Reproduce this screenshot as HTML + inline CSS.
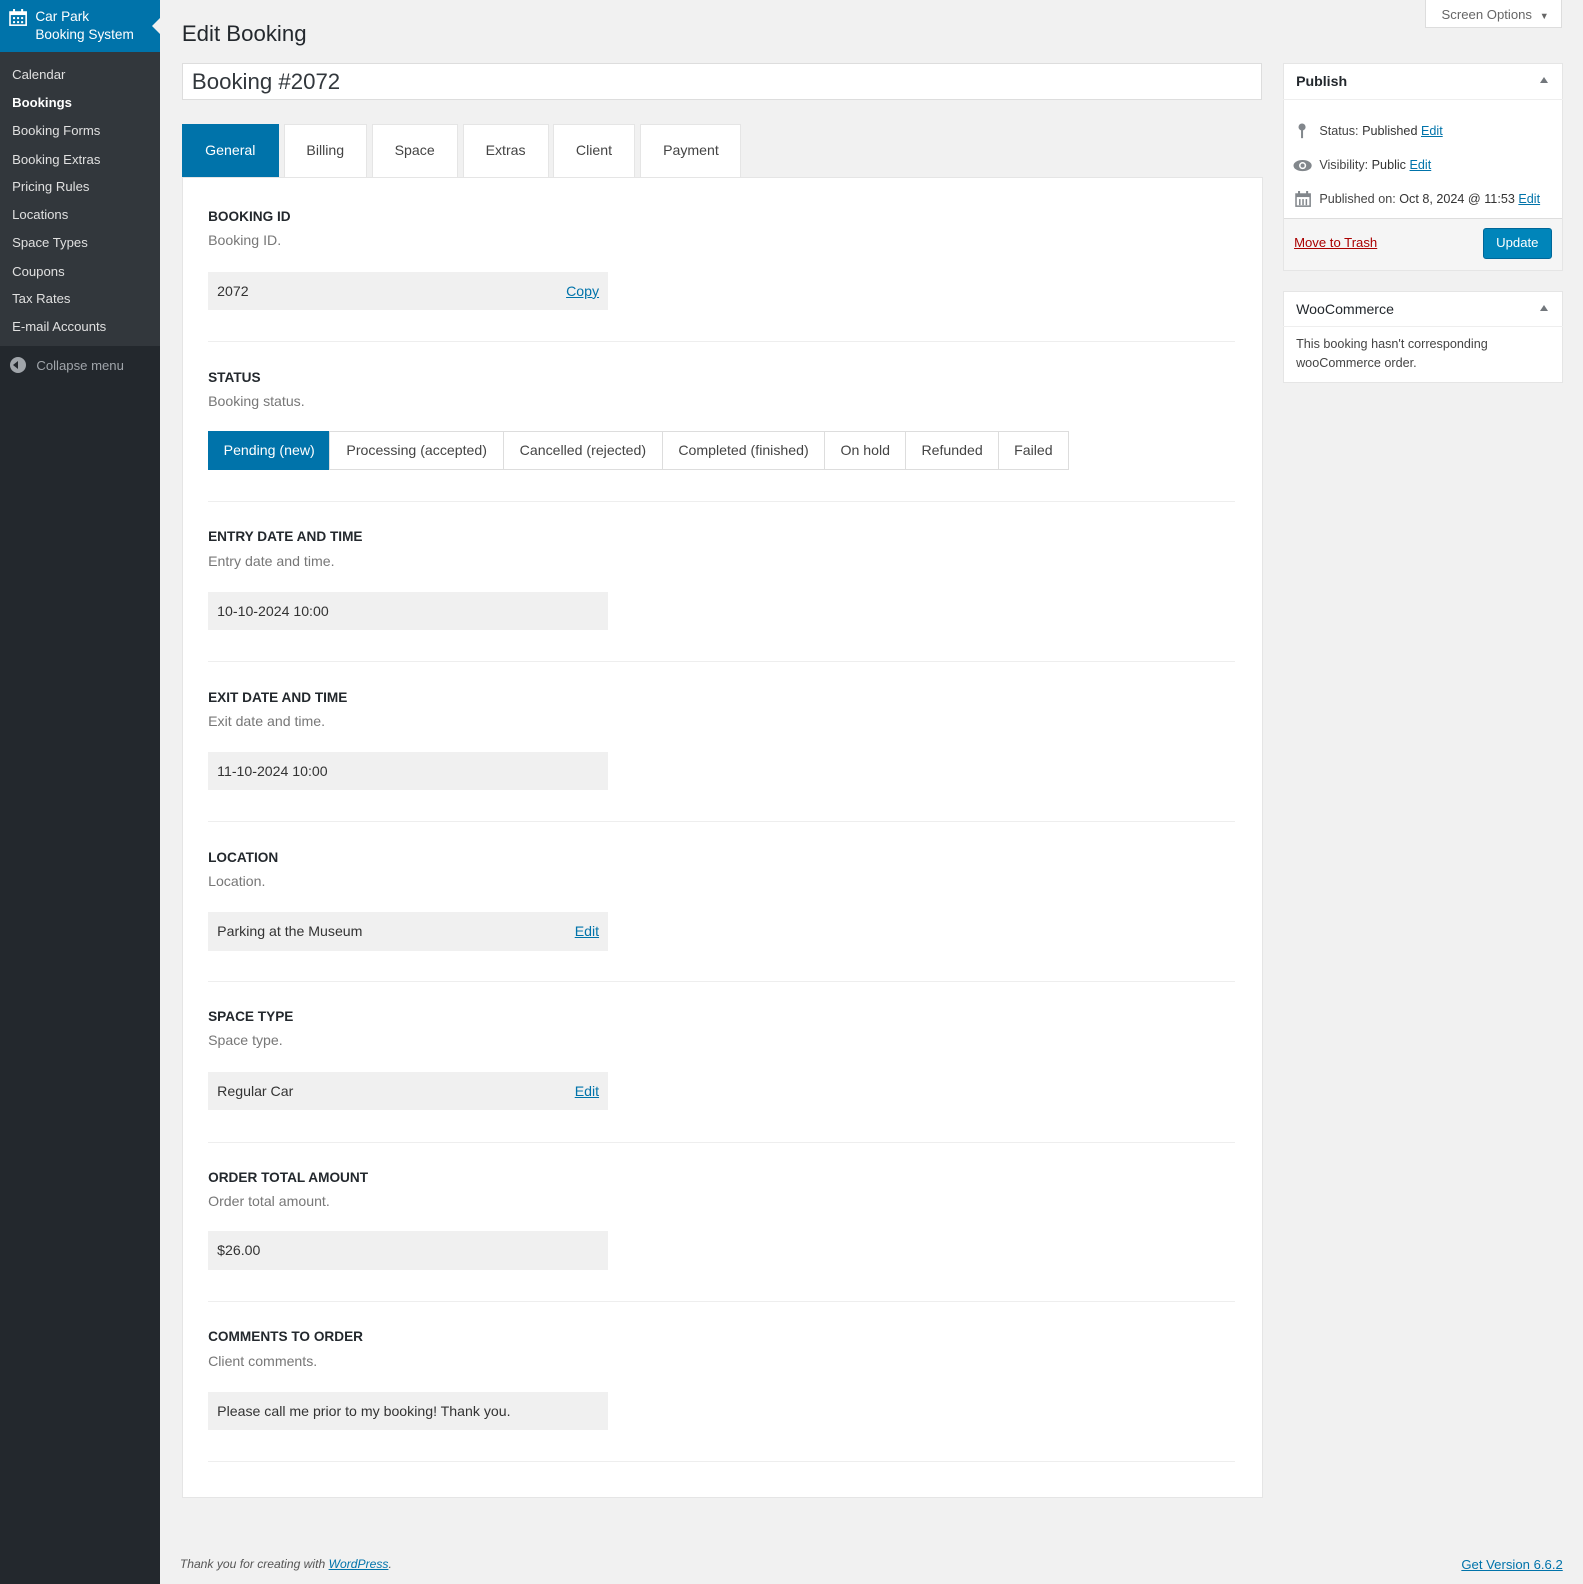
<!DOCTYPE html>
<html><head><meta charset="utf-8"><style>
html{zoom:1.0102}
*{box-sizing:border-box;margin:0;padding:0}
body{width:1567px;height:1568px;background:#f1f1f1;font-family:"Liberation Sans",sans-serif;color:#23282d;position:relative;overflow:hidden}
.a{position:absolute}
#side{left:0;top:0;width:158px;height:1568px;background:#23282d}
#hd{left:0;top:0;width:158px;height:51px;background:#0073aa;color:#fff;font-size:13.5px;line-height:18px;padding:8px 0 0 35px}
#hd:after{content:"";position:absolute;right:0;top:18px;border:8px solid transparent;border-right-color:#f1f1f1}
#menu{left:0;top:51px;width:158px;height:292px;background:#32373c}
.mi{position:absolute;left:12px;font-size:13px;color:#e0e0e0}
.w{background:#fff;border:1px solid #e2e4e7}
.tab{position:absolute;top:123px;height:52px;background:#fff;border:1px solid #e5e5e5;border-bottom:none;font-size:14px;color:#444;text-align:center;line-height:50px}
.t{position:absolute;left:206px;font-size:13.5px;font-weight:bold;color:#23282d}
.d{position:absolute;left:206px;font-size:14px;color:#777}
.in{position:absolute;left:206px;width:396px;height:38px;background:#f0f0f0;font-size:14px;color:#333;line-height:38px;padding-left:9px}
.in a{position:absolute;right:9px;color:#0073aa;text-decoration:underline}
.hr{position:absolute;left:206px;width:1017px;height:1px;background:#eee}
.sb{position:absolute;top:427px;height:38px;border:1px solid #ddd;font-size:14px;color:#444;line-height:36px;text-align:center;background:#fff}
a{color:#0073aa}
</style></head><body>
<div class="a" id="side"></div>
<div class="a" id="hd">Car Park<br>Booking System</div>
<svg class="a" style="left:9px;top:9px" width="18" height="17" viewBox="0 0 18 17"><rect x="1" y="3" width="16" height="13" fill="none" stroke="#fff" stroke-width="1.6"/><rect x="1" y="3" width="16" height="3" fill="#fff"/><rect x="4" y="0" width="2" height="4" fill="#fff"/><rect x="12" y="0" width="2" height="4" fill="#fff"/><g fill="#fff"><rect x="4" y="8" width="2" height="2"/><rect x="8" y="8" width="2" height="2"/><rect x="12" y="8" width="2" height="2"/><rect x="4" y="12" width="2" height="2"/><rect x="8" y="12" width="2" height="2"/><rect x="12" y="12" width="2" height="2"/></g></svg>
<div class="a" id="menu"></div>
<div class="mi" style="top:66px">Calendar</div>
<div class="mi" style="top:94px;color:#fff;font-weight:bold">Bookings</div>
<div class="mi" style="top:122px">Booking Forms</div>
<div class="mi" style="top:150px">Booking Extras</div>
<div class="mi" style="top:177px">Pricing Rules</div>
<div class="mi" style="top:205px">Locations</div>
<div class="mi" style="top:233px">Space Types</div>
<div class="mi" style="top:261px">Coupons</div>
<div class="mi" style="top:288px">Tax Rates</div>
<div class="mi" style="top:316px">E-mail Accounts</div>
<div class="a" style="left:10px;top:353px;width:16px;height:16px;border-radius:50%;background:#a0a5aa"></div>
<div class="a" style="left:13px;top:357px;border:4px solid transparent;border-right:5px solid #23282d;border-left:none"></div>
<div class="mi" style="left:36px;top:354px;color:#a0a5aa">Collapse menu</div>

<div class="a" style="left:180px;top:21px;font-size:22px;color:#23282d">Edit Booking</div>
<div class="a" style="left:1411px;top:0;width:135px;height:28px;background:#fff;border:1px solid #ddd;border-top:none;font-size:13px;color:#666;padding:7px 0 0 15px">Screen Options <span style="font-size:9px;margin-left:4px">▼</span></div>
<div class="a" style="left:180px;top:62px;width:1069px;height:37px;background:#fff;border:1px solid #ddd;font-size:22px;padding:5px 0 0 9px;color:#32373c">Booking #2072</div>

<div class="a w" style="left:180px;top:175px;width:1070px;height:1308px;border-color:#e5e5e5"></div>
<div class="tab" style="left:180px;width:96px;background:#0073aa;color:#fff;border-color:#0073aa">General</div>
<div class="tab" style="left:281px;width:82px">Billing</div>
<div class="tab" style="left:368px;width:85px">Space</div>
<div class="tab" style="left:458px;width:85px">Extras</div>
<div class="tab" style="left:547px;width:82px">Client</div>
<div class="tab" style="left:634px;width:100px">Payment</div>

<div class="t" style="top:207px">BOOKING ID</div><div class="d" style="top:230px">Booking ID.</div>
<div class="in" style="top:269px">2072<a>Copy</a></div><div class="hr" style="top:338px"></div>

<div class="t" style="top:366px">STATUS</div><div class="d" style="top:389px">Booking status.</div>
<div class="sb" style="left:206px;width:121px;background:#0073aa;color:#fff;border-color:#0073aa">Pending (new)</div>
<div class="sb" style="left:326px;width:173px">Processing (accepted)</div>
<div class="sb" style="left:498px;width:158px">Cancelled (rejected)</div>
<div class="sb" style="left:655px;width:162px">Completed (finished)</div>
<div class="sb" style="left:816px;width:81px">On hold</div>
<div class="sb" style="left:896px;width:93px">Refunded</div>
<div class="sb" style="left:988px;width:70px">Failed</div>
<div class="hr" style="top:496px"></div>

<div class="t" style="top:524px">ENTRY DATE AND TIME</div><div class="d" style="top:547px">Entry date and time.</div>
<div class="in" style="top:586px">10-10-2024 10:00</div><div class="hr" style="top:654px"></div>

<div class="t" style="top:683px">EXIT DATE AND TIME</div><div class="d" style="top:706px">Exit date and time.</div>
<div class="in" style="top:744px">11-10-2024 10:00</div><div class="hr" style="top:813px"></div>

<div class="t" style="top:841px">LOCATION</div><div class="d" style="top:864px">Location.</div>
<div class="in" style="top:903px">Parking at the Museum<a>Edit</a></div><div class="hr" style="top:971px"></div>

<div class="t" style="top:999px">SPACE TYPE</div><div class="d" style="top:1022px">Space type.</div>
<div class="in" style="top:1061px">Regular Car<a>Edit</a></div><div class="hr" style="top:1130px"></div>

<div class="t" style="top:1158px">ORDER TOTAL AMOUNT</div><div class="d" style="top:1181px">Order total amount.</div>
<div class="in" style="top:1219px">$26.00</div><div class="hr" style="top:1288px"></div>

<div class="t" style="top:1316px">COMMENTS TO ORDER</div><div class="d" style="top:1339px">Client comments.</div>
<div class="in" style="top:1378px">Please call me prior to my booking! Thank you.</div><div class="hr" style="top:1446px"></div>

<div class="a w" style="left:1270px;top:62px;width:277px;height:206px;border-color:#e5e5e5"></div>
<div class="a" style="left:1270px;top:98px;width:277px;height:1px;background:#eee"></div>
<div class="a" style="left:1283px;top:72px;font-size:14px;font-weight:bold;color:#23282d">Publish</div>
<div class="a" style="left:1524px;top:76px;border:4px solid transparent;border-bottom:6px solid #72777c;border-top:none"></div>
<div class="a" style="left:1306px;top:123px;font-size:12.5px;color:#444">Status: <span style="color:#333">Published</span> <a style="text-decoration:underline">Edit</a></div>
<div class="a" style="left:1306px;top:156px;font-size:12.5px;color:#444">Visibility: <span style="color:#333">Public</span> <a style="text-decoration:underline">Edit</a></div>
<div class="a" style="left:1306px;top:190px;font-size:12.5px;color:#444">Published on: <span style="color:#333">Oct 8, 2024 @ 11:53</span> <a style="text-decoration:underline">Edit</a></div>
<svg class="a" style="left:1284px;top:122px" width="10" height="16"><circle cx="5" cy="4" r="3.5" fill="#82878c"/><rect x="4" y="6" width="2" height="9" fill="#82878c"/></svg>
<svg class="a" style="left:1280px;top:157px" width="19" height="13"><ellipse cx="9.5" cy="6.5" rx="9" ry="5.5" fill="#82878c"/><circle cx="9.5" cy="6.5" r="3.5" fill="#fff"/><circle cx="9.5" cy="6.5" r="2" fill="#82878c"/></svg>
<svg class="a" style="left:1282px;top:189px" width="16" height="16"><rect x="1" y="3" width="14" height="12" fill="none" stroke="#82878c" stroke-width="1.5"/><rect x="1" y="3" width="14" height="3" fill="#82878c"/><rect x="3" y="0" width="2" height="4" fill="#82878c"/><rect x="11" y="0" width="2" height="4" fill="#82878c"/><g fill="#82878c"><rect x="4" y="8" width="1.5" height="6"/><rect x="7.2" y="8" width="1.5" height="6"/><rect x="10.5" y="8" width="1.5" height="6"/></g></svg>
<div class="a" style="left:1271px;top:216px;width:275px;height:51px;background:#f5f5f5;border-top:1px solid #ddd"></div>
<div class="a" style="left:1281px;top:233px;font-size:13px;color:#a00;text-decoration:underline">Move to Trash</div>
<div class="a" style="left:1468px;top:226px;width:68px;height:30px;background:#0085ba;border:1px solid #006799;border-radius:3px;color:#fff;font-size:13px;text-align:center;line-height:28px">Update</div>

<div class="a w" style="left:1270px;top:288px;width:277px;height:91px;border-color:#e5e5e5"></div>
<div class="a" style="left:1270px;top:323px;width:277px;height:1px;background:#eee"></div>
<div class="a" style="left:1283px;top:298px;font-size:14px;color:#23282d">WooCommerce</div>
<div class="a" style="left:1524px;top:302px;border:4px solid transparent;border-bottom:6px solid #72777c;border-top:none"></div>
<div class="a" style="left:1283px;top:332px;font-size:12.5px;color:#444;line-height:18px">This booking hasn't corresponding<br>wooCommerce order.</div>

<div class="a" style="left:178px;top:1541px;font-size:12px;color:#555;font-style:italic">Thank you for creating with <a style="text-decoration:underline">WordPress</a>.</div>
<div class="a" style="right:20px;top:1541px;font-size:13px"><a style="text-decoration:underline">Get Version 6.6.2</a></div>
</body></html>
